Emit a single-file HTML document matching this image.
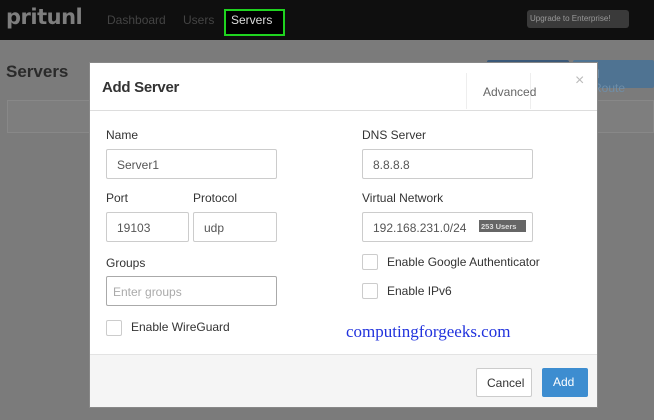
<!DOCTYPE html><html><head><style>
*{box-sizing:border-box;margin:0;padding:0}
body{width:654px;height:420px;overflow:hidden;position:relative;background:#7b7b7b;font-family:"Liberation Sans",sans-serif;}
.nav{position:absolute;left:0;top:0;width:654px;height:40px;background:#0f0f0f}
.a{position:absolute;font-size:12px;color:#3c3c3c}
.in{position:absolute;height:30px;border:1px solid #ccc;background:#fff;font-size:12px;color:#555;padding:8px 10px;border-radius:2px}
.lb{position:absolute;font-size:12px;color:#333}
.cb{position:absolute;width:16px;height:16px;border:1px solid #ccc;border-radius:2px;background:#fff}
</style></head><body>
<div class="nav"></div>
<div class="a" style="left:6px;top:5px;font-size:21px;font-weight:bold;color:#7e7e7e;font-family:'DejaVu Sans',sans-serif;letter-spacing:-0.5px">pritunl</div>
<div class="a" style="left:107px;top:13px;color:#444">Dashboard</div>
<div class="a" style="left:183px;top:13px;color:#444">Users</div>
<div style="position:absolute;left:224px;top:9px;width:61px;height:27px;border:2px solid #1fd31f;background:#000"></div>
<div class="a" style="left:231px;top:13px;color:#ddd">Servers</div>
<div style="position:absolute;left:527px;top:10px;width:102px;height:18px;background:#3a3a3a;border-radius:3px;color:#999;font-size:8px;padding:4px 3px">Upgrade to Enterprise!</div>
<div class="a" style="left:6px;top:62px;font-size:17px;font-weight:bold;color:#2a2a2a">Servers</div>
<div style="position:absolute;left:487px;top:60px;width:82px;height:28px;background:#3a5878;border-radius:2px"></div>
<div style="position:absolute;left:573px;top:60px;width:81px;height:28px;background:#4f7392;border-radius:2px;color:#6f8ea8;font-size:12px;padding:7px 20px">d Route</div>
<div style="position:absolute;left:7px;top:100px;width:647px;height:33px;background:#7e7e7e;border:1px solid #888"></div>
<div style="position:absolute;left:89px;top:62px;width:509px;height:346px;background:#fff;border:1px solid #888">
<div style="position:absolute;left:0;top:0;width:507px;height:48px;border-bottom:1px solid #ddd"></div>
<div style="position:absolute;left:12px;top:16px;font-size:15px;font-weight:bold;color:#333;letter-spacing:-0.3px">Add Server</div>
<div style="position:absolute;left:376px;top:10px;width:65px;height:36px;border-left:1px solid #eee;border-right:1px solid #eee;font-size:12px;color:#666;padding:12px 0 0 16px">Advanced</div>
<div style="position:absolute;left:485px;top:9px;font-size:16px;color:#bbb">×</div>
<div style="position:absolute;left:0;top:291px;width:507px;height:53px;background:#f5f5f5;border-top:1px solid #e3e3e3"></div>
<div style="position:absolute;left:386px;top:305px;width:56px;height:29px;background:#fff;border:1px solid #ccc;border-radius:2px;font-size:12px;color:#333;padding:7px 10px">Cancel</div>
<div style="position:absolute;left:452px;top:305px;width:46px;height:29px;background:#3d8dd0;border-radius:2px;font-size:12px;color:#fff;padding:7px 11px">Add</div>
</div>
<div class="lb" style="left:106px;top:128px">Name</div>
<div class="in" style="left:106px;top:149px;width:171px">Server1</div>
<div class="lb" style="left:106px;top:191px">Port</div>
<div class="in" style="left:106px;top:212px;width:83px">19103</div>
<div class="lb" style="left:193px;top:191px">Protocol</div>
<div class="in" style="left:193px;top:212px;width:84px">udp</div>
<div class="lb" style="left:106px;top:256px">Groups</div>
<div class="in" style="left:106px;top:276px;width:171px;border-color:#aaa;color:#aaa;padding-left:6px">Enter groups</div>
<div class="cb" style="left:106px;top:320px"></div>
<div class="lb" style="left:131px;top:320px">Enable WireGuard</div>
<div class="lb" style="left:362px;top:128px">DNS Server</div>
<div class="in" style="left:362px;top:149px;width:171px">8.8.8.8</div>
<div class="lb" style="left:362px;top:191px">Virtual Network</div>
<div class="in" style="left:362px;top:212px;width:171px">192.168.231.0/24</div>
<div style="position:absolute;left:479px;top:220px;width:47px;height:12px;background:#666;color:#ddd;font-size:7.5px;font-weight:bold;padding:2px 2px">253 Users</div>
<div class="cb" style="left:362px;top:254px"></div>
<div class="lb" style="left:387px;top:255px">Enable Google Authenticator</div>
<div class="cb" style="left:362px;top:283px"></div>
<div class="lb" style="left:387px;top:284px">Enable IPv6</div>
<div style="position:absolute;left:346px;top:322px;font-family:'Liberation Serif',serif;font-size:17px;color:#2233dd">computingforgeeks.com</div>
</body></html>
